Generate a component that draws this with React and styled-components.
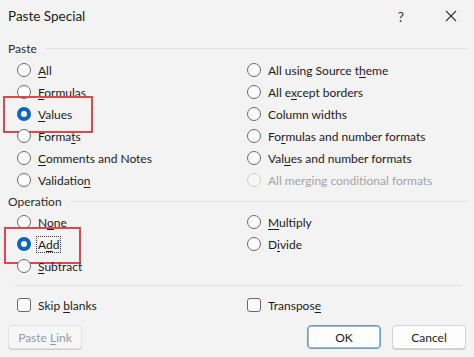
import React from "react";
import styled, { createGlobalStyle, css } from "styled-components";

const Global = createGlobalStyle`
  html, body { margin: 0; padding: 0; background: #f3f3f3; }
  #root { width: 474px; height: 357px; }
`;

const Dialog = styled.div`
  width: 474px;
  height: 357px;
  box-sizing: border-box;
  background: #f3f3f3;
  font-family: "Lato", "Noto Sans", sans-serif;
  font-size: 12px;
  color: #1b1b1b;
  display: flex;
  flex-direction: column;
  overflow: hidden;
`;

const TitleBar = styled.div`
  height: 32px;
  display: flex;
  align-items: center;
  padding-left: 8px;
`;

const Title = styled.div`
  flex: 1;
  font-size: 13.5px;
  color: #1b1b1b;
`;

const TitleButton = styled.div`
  width: 46px;
  height: 32px;
  display: flex;
  align-items: center;
  justify-content: center;
  font-size: 14px;
  color: #333;
  margin-right: ${(p) => p.$mr || 0}px;
`;

const Legend = styled.div`
  display: flex;
  align-items: center;
  height: 20px;
  padding-left: 8px;
  padding-right: 6px;
  gap: 8px;
  margin-top: ${(p) => p.$mt || 0}px;
  color: #2b2b2b;
  &::after {
    content: "";
    flex: 1;
    height: 1px;
    background: #e2e2e2;
  }
`;

const Grid = styled.div`
  display: grid;
  grid-template-columns: 230px 1fr;
  grid-auto-flow: column;
  grid-template-rows: ${(p) => `repeat(${p.$rows}, 22px)`};
  padding-left: 17px;
  margin-top: ${(p) => p.$mt || 0}px;
`;

const Item = styled.div`
  position: relative;
  display: flex;
  align-items: center;
  gap: 7px;
  color: ${(p) => (p.$disabled ? "#a3a3a3" : "#1b1b1b")};
  ${(p) =>
    p.$hl &&
    css`
      &::after {
        content: "";
        position: absolute;
        left: ${p.$hl.l}px;
        top: ${p.$hl.t}px;
        width: ${p.$hl.w}px;
        height: ${p.$hl.h}px;
        border: 2px solid #e0474c;
        box-sizing: border-box;
        pointer-events: none;
      }
    `}
`;

const Radio = styled.span`
  width: 14px;
  height: 14px;
  box-sizing: border-box;
  border-radius: 50%;
  flex: none;
  border: 1px solid ${(p) => (p.$disabled ? "#d2d2d2" : "#6a6a6a")};
  background: ${(p) => (p.$disabled ? "#f7f7f7" : "#fbfbfb")};
  display: flex;
  align-items: center;
  justify-content: center;
  ${(p) =>
    p.$checked &&
    css`
      border: none;
      background: #0a64c0;
      &::after {
        content: "";
        width: 6px;
        height: 6px;
        border-radius: 50%;
        background: #fff;
      }
    `}
`;

const Box = styled.span`
  width: 14px;
  height: 14px;
  box-sizing: border-box;
  border-radius: 3px;
  flex: none;
  border: 1px solid #6a6a6a;
  background: #fbfbfb;
`;

const Label = styled.span`
  white-space: pre;
`;

const U = styled.span`
  text-decoration: underline;
  text-underline-offset: 2px;
`;

const Focus = styled.span`
  outline: 1px dotted #333;
  padding: 0 1px;
  margin-left: -1px;
`;

const Separator = styled.div`
  height: 1px;
  background: #e2e2e2;
  margin: 8px 12px 0 15px;
`;

const CheckRow = styled.div`
  display: grid;
  grid-template-columns: 230px 1fr;
  height: 22px;
  padding-left: 17px;
  margin-top: 8px;
`;

const Buttons = styled.div`
  display: flex;
  align-items: center;
  padding: 0 8px 0 8px;
  margin-top: 9px;
  gap: 11px;
`;

const Spacer = styled.div`
  flex: 1;
`;

const Button = styled.div`
  width: 74px;
  height: 24px;
  box-sizing: border-box;
  border-radius: 4px;
  display: flex;
  align-items: center;
  justify-content: center;
  background: ${(p) => (p.$disabled ? "#f6f6f6" : "#fdfdfd")};
  border: 1px solid ${(p) => (p.$primary ? "#6f9bc3" : p.$disabled ? "#e2e2e2" : "#d4d4d4")};
  box-shadow: ${(p) => (p.$primary ? "0 0 0 1px #9bbad6 inset" : "0 1px 0 #cfcfcf")};
  color: ${(p) => (p.$disabled ? "#9a9a9a" : "#1b1b1b")};
`;

const L = ({ pre = "", u = "", post = "" }) => (
  <Label>
    {pre}
    {u && <U>{u}</U>}
    {post}
  </Label>
);

const pasteLeft = [
  { t: <L u="A" post="ll" /> },
  { t: <L u="F" post="ormulas" /> },
  { t: <L u="V" post="alues" />, checked: true, hl: { l: -14, t: -7, w: 90, h: 37 } },
  { t: <L pre="Forma" u="t" post="s" /> },
  { t: <L u="C" post="omments and Notes" /> },
  { t: <L pre="Validatio" u="n" /> },
];

const pasteRight = [
  { t: <L pre="All using Source t" u="h" post="eme" /> },
  { t: <L pre="All e" u="x" post="cept borders" /> },
  { t: <L pre="Column widths" /> },
  { t: <L pre="Fo" u="r" post="mulas and number formats" /> },
  { t: <L pre="Val" u="u" post="es and number formats" /> },
  { t: <L pre="All merging conditional formats" />, disabled: true },
];

const opLeft = [
  { t: <L pre="N" u="o" post="ne" /> },
  { t: <L pre="A" u="d" post="d" />, checked: true, focus: true, hl: { l: -13, t: -6, w: 77, h: 37 } },
  { t: <L u="S" post="ubtract" /> },
];

const opRight = [
  { t: <L u="M" post="ultiply" /> },
  { t: <L pre="D" u="i" post="vide" /> },
  { t: null },
];

const RadioItem = ({ item }) =>
  item.t === null ? (
    <div />
  ) : (
    <Item $disabled={item.disabled} $hl={item.hl}>
      <Radio $checked={item.checked} $disabled={item.disabled} />
      {item.focus ? <Focus>{item.t}</Focus> : item.t}
    </Item>
  );

export default function App() {
  return (
    <>
      <Global />
      <Dialog>
        <TitleBar>
          <Title>Paste Special</Title>
          <TitleButton $mr={4}>?</TitleButton>
          <TitleButton>
            <svg width="12" height="12" viewBox="0 0 12 12">
              <path d="M1 1L11 11M11 1L1 11" stroke="#333" strokeWidth="1.1" />
            </svg>
          </TitleButton>
        </TitleBar>
        <Legend $mt={6}>Paste</Legend>
        <Grid $rows={6} $mt={1}>
          {[...pasteLeft, ...pasteRight].map((it, i) => (
            <RadioItem key={i} item={it} />
          ))}
        </Grid>
        <Legend $mt={0}>Operation</Legend>
        <Grid $rows={3} $mt={0}>
          {[...opLeft, ...opRight].map((it, i) => (
            <RadioItem key={i} item={it} />
          ))}
        </Grid>
        <Separator />
        <CheckRow>
          <Item>
            <Box />
            <L pre="Skip " u="b" post="lanks" />
          </Item>
          <Item>
            <Box />
            <L pre="Transpos" u="e" />
          </Item>
        </CheckRow>
        <Buttons>
          <Button $disabled>
            <L pre="Paste " u="L" post="ink" />
          </Button>
          <Spacer />
          <Button $primary>OK</Button>
          <Button>Cancel</Button>
        </Buttons>
      </Dialog>
    </>
  );
}
